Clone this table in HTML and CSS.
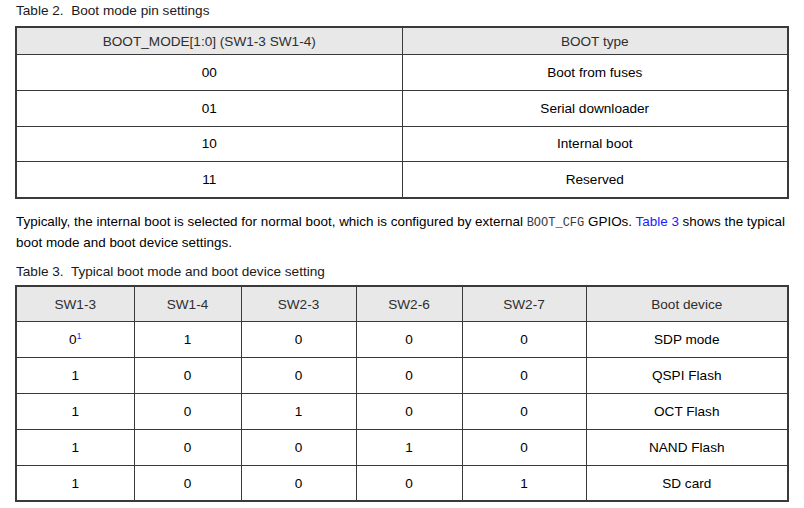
FILE: index.html
```html
<!DOCTYPE html>
<html>
<head>
<meta charset="utf-8">
<link rel="stylesheet" href="styles.css">
</head>
<body>
<div class="page">
  <div class="caption cap2">Table 2.&nbsp; Boot mode pin settings</div>
  <table class="tbl t2">
    <colgroup><col class="c2a"><col class="c2b"></colgroup>
    <thead>
      <tr><th>BOOT_MODE[1:0] (SW1-3 SW1-4)</th><th>BOOT type</th></tr>
    </thead>
    <tbody>
      <tr><td>00</td><td>Boot from fuses</td></tr>
      <tr><td>01</td><td>Serial downloader</td></tr>
      <tr><td>10</td><td>Internal boot</td></tr>
      <tr><td>11</td><td>Reserved</td></tr>
    </tbody>
  </table>
  <p class="para">Typically, the internal boot is selected for normal boot, which is configured by external <code class="mono">BOOT_CFG</code> GPIOs. <a class="link">Table 3</a> shows the typical<br>boot mode and boot device settings.</p>
  <div class="caption cap3">Table 3.&nbsp; Typical boot mode and boot device setting</div>
  <table class="tbl t3">
    <colgroup>
      <col class="w1"><col class="w2"><col class="w3"><col class="w4"><col class="w5"><col class="w6">
    </colgroup>
    <thead>
      <tr><th>SW1-3</th><th>SW1-4</th><th>SW2-3</th><th>SW2-6</th><th>SW2-7</th><th>Boot device</th></tr>
    </thead>
    <tbody>
      <tr><td>0<sup class="fn">1</sup></td><td>1</td><td>0</td><td>0</td><td>0</td><td>SDP mode</td></tr>
      <tr><td>1</td><td>0</td><td>0</td><td>0</td><td>0</td><td>QSPI Flash</td></tr>
      <tr><td>1</td><td>0</td><td>1</td><td>0</td><td>0</td><td>OCT Flash</td></tr>
      <tr><td>1</td><td>0</td><td>0</td><td>1</td><td>0</td><td>NAND Flash</td></tr>
      <tr><td>1</td><td>0</td><td>0</td><td>0</td><td>1</td><td>SD card</td></tr>
    </tbody>
  </table>
</div>
</body>
</html>
```

FILE: styles.css
```css
html, body {
  margin: 0;
  padding: 0;
  background: #ffffff;
}
body {
  font-family: "Liberation Sans", Arial, sans-serif;
  font-size: 13.6px;
  color: #000000;
}
.page {
  padding: 2px 17px 0 15px;
}
.caption {
  line-height: 18px;
  color: #1a1a1a;
  padding-left: 1px;
}
.cap2 {
  margin-bottom: 6px;
}
.cap3 {
  margin-bottom: 4px;
}
.tbl {
  border-collapse: collapse;
  table-layout: fixed;
  width: 772px;
  border: 2px solid #3a3a3a;
}
.tbl th,
.tbl td {
  border: 1px solid #3a3a3a;
  text-align: center;
  padding: 0;
  font-weight: normal;
}
.tbl th {
  background: #e8e8e8;
  color: #2e2e2e;
}
.t2 th {
  height: 26px;
}
.t2 td {
  height: 34.75px;
}
.c2a { width: 386px; }
.c2b { width: 386px; }
.t3 th {
  height: 34px;
}
.t3 td {
  height: 34.9px;
}
.w1 { width: 118px; }
.w2 { width: 107px; }
.w3 { width: 115px; }
.w4 { width: 106px; }
.w5 { width: 124px; }
.w6 { width: 202px; }
.para {
  margin: 13px 0 11px 1px;
  line-height: 19px;
  font-size: 13.45px;
  white-space: nowrap;
  color: #000000;
}
.mono {
  font-family: "Liberation Mono", "Courier New", monospace;
  font-size: 12px;
  color: #3a3a3a;
}
.link {
  color: #1a1aff;
}
.fn {
  color: #1a1aff;
  font-size: 8.5px;
  vertical-align: 5px;
  line-height: 0;
}
```
